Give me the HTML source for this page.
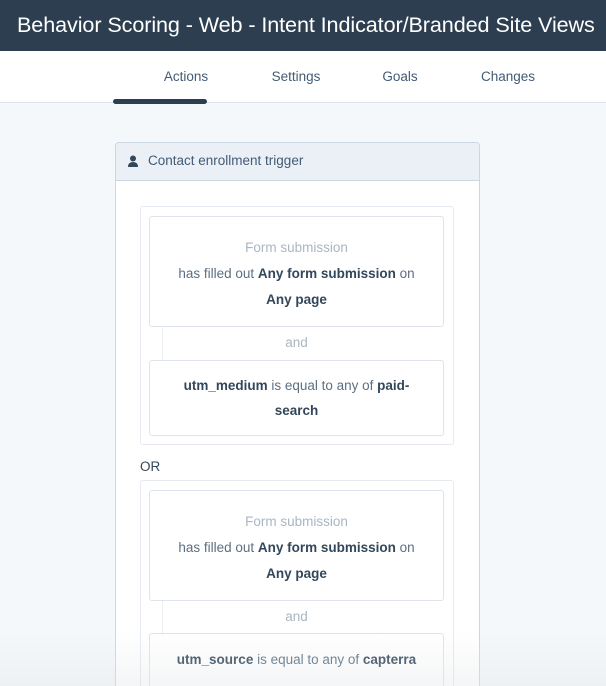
<!DOCTYPE html>
<html style="width:606px;height:686px;overflow:hidden"><head><style>
*{margin:0;padding:0;box-sizing:border-box}
body{width:606px;height:686px;overflow:hidden;background:#f5f8fa;font-family:"Liberation Sans",sans-serif;position:relative;color:#33475b}
.hdr{position:absolute;left:0;top:0;width:606px;height:51px;background:#2d3e50;color:#fff;font-size:21.6px;line-height:50px;padding-left:17px;white-space:nowrap;letter-spacing:-0.1px;overflow:hidden}
.tabs{position:absolute;left:0;top:51px;width:606px;height:52px;background:#fff;border-bottom:1px solid #dfe3eb}
.tab{position:absolute;top:18px;font-size:13.5px;color:#425b76;transform:translateX(-50%)}
.ul{position:absolute;left:113px;top:48px;width:94px;height:5px;background:#2d3e50;border-radius:3px}
.card{position:absolute;left:115px;top:142px;width:365px;height:544px;background:#fff;border:1px solid #cbd6e2;border-bottom:none;border-radius:4px 4px 0 0;overflow:hidden}
.ch{height:38px;background:#eaf0f6;border-bottom:1px solid #cbd6e2;font-size:13.5px;line-height:36px;padding-left:32px;position:relative;color:#425b76}
.grp{position:absolute;left:24px;width:314px;border:1px solid #e5eaf0;border-radius:3px}
.it{position:absolute;left:8px;width:295px;border:1px solid #dfe3eb;border-radius:3px;text-align:center;font-size:13.5px;color:#5c6f82}
.it b{color:#33475b}
.g{color:#a9b6c4}
.and{position:absolute;left:8px;width:295px;text-align:center;font-size:13.5px;color:#a9b6c4}
.vl{position:absolute;left:21px;width:1px;background:#eef1f4}
.or{position:absolute;left:24px;font-size:13.5px;color:#33475b}
.fade{position:absolute;left:0;top:630px;width:606px;height:56px;background:linear-gradient(rgba(230,233,236,0),rgba(225,228,231,.35))}
</style></head><body>
<div class="hdr">Behavior Scoring - Web - Intent Indicator/Branded Site Views</div>
<div class="tabs">
<span class="tab" style="left:186px">Actions</span>
<span class="tab" style="left:296px">Settings</span>
<span class="tab" style="left:400px">Goals</span>
<span class="tab" style="left:508px">Changes</span>
<div class="ul"></div>
</div>
<div class="card">
<div class="ch"><svg style="position:absolute;left:12px;top:12px" width="10" height="12" viewBox="0 0 10 12"><circle cx="5" cy="3.5" r="3" fill="#33475b"/><path d="M0 12 Q0 7 5 7 Q10 7 10 12Z" fill="#33475b"/></svg>Contact enrollment trigger</div>
<div class="grp" style="top:63px;height:239px">
<div class="it" style="top:9px;height:111px;padding-top:18px;line-height:26px"><div class="g">Form submission</div>has filled out <b>Any form submission</b> on<br><b>Any page</b></div>
<div class="vl" style="top:120px;height:34px"></div>
<div class="and" style="top:128px">and</div>
<div class="it" style="top:153px;height:76px;padding-top:12px;line-height:25px"><b>utm_medium</b> is equal to any of <b>paid-</b><br><b>search</b></div>
</div>
<div class="or" style="top:316px">OR</div>
<div class="grp" style="top:337px;height:220px">
<div class="it" style="top:9px;height:111px;padding-top:18px;line-height:26px"><div class="g">Form submission</div>has filled out <b>Any form submission</b> on<br><b>Any page</b></div>
<div class="vl" style="top:120px;height:34px"></div>
<div class="and" style="top:128px">and</div>
<div class="it" style="top:152px;height:60px;padding-top:16px;line-height:20px"><b>utm_source</b> is equal to any of <b>capterra</b></div>
</div>
</div>
<div class="fade"></div>
</body></html>
